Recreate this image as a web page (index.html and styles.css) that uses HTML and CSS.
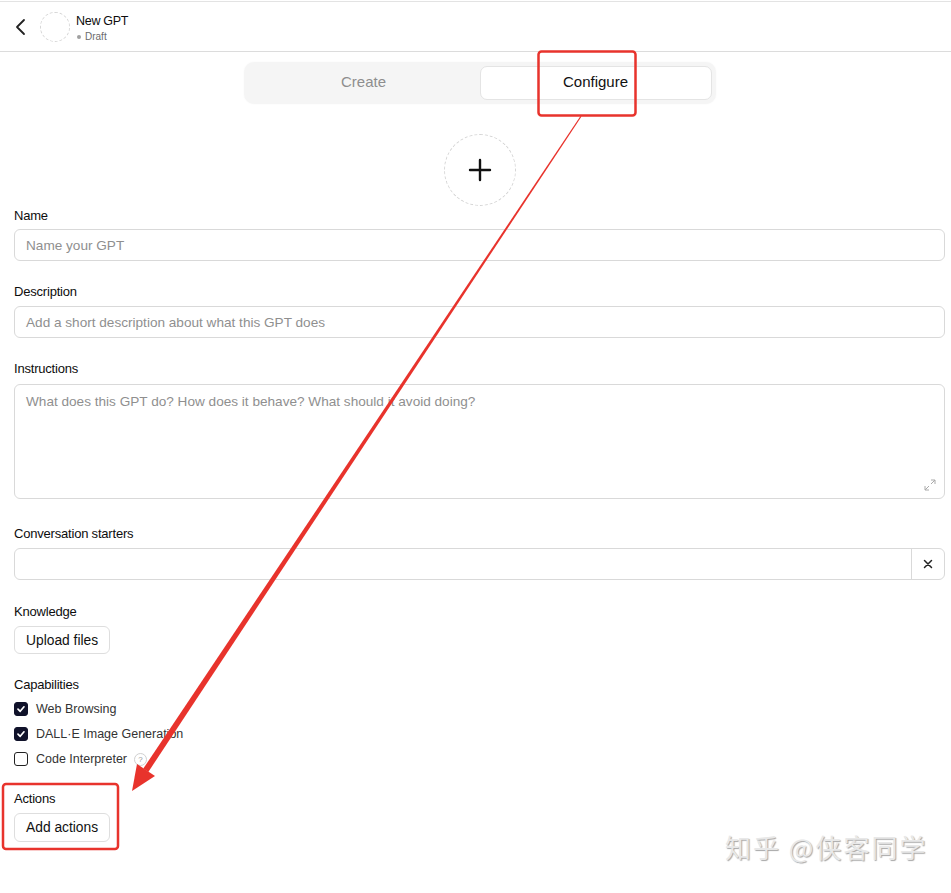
FILE: index.html
```html
<!DOCTYPE html>
<html lang="en">
<head>
  <meta charset="UTF-8" />
  <meta name="viewport" content="width=device-width, initial-scale=1" />
  <title>New GPT</title>
  <link rel="stylesheet" href="styles.css">
</head>
<body>

  <header class="topbar">
    <svg class="back" width="14" height="18" viewBox="0 0 14 18"><path d="M10 2 L3 9 L10 16" fill="none" stroke="#222" stroke-width="1.8" stroke-linecap="round" stroke-linejoin="round"/></svg>
    <div class="avatar"></div>
    <div class="title">
      <div class="name">New GPT</div>
      <div class="status"><span class="dot"></span>Draft</div>
    </div>
  </header>

  <main class="form">
    <div class="tabs">
      <div class="tab">Create</div>
      <div class="tab active">Configure</div>
    </div>

    <div class="upload">
      <svg width="24" height="24" viewBox="0 0 24 24"><path d="M12 2 V22 M2 12 H22" stroke="#111" stroke-width="2.4" stroke-linecap="round"/></svg>
    </div>

    <div class="field first">
      <label>Name</label>
      <div class="input">Name your GPT</div>
    </div>

    <div class="field">
      <label>Description</label>
      <div class="input">Add a short description about what this GPT does</div>
    </div>

    <div class="field">
      <label>Instructions</label>
      <div class="input area">
        What does this GPT do? How does it behave? What should it avoid doing?
        <svg class="resize" width="12" height="12" viewBox="0 0 12 12"><path d="M7 1 H11 V5 M11 1 L7 5 M5 11 H1 V7 M1 11 L5 7" fill="none" stroke="#aaa" stroke-width="1"/></svg>
      </div>
    </div>

    <div class="field starters">
      <label>Conversation starters</label>
      <div class="input row">
        <div class="grow"></div>
        <div class="remove">
          <svg width="10" height="10" viewBox="0 0 10 10"><path d="M1.5 1.5 L8.5 8.5 M8.5 1.5 L1.5 8.5" stroke="#222" stroke-width="1.5" stroke-linecap="round"/></svg>
        </div>
      </div>
    </div>

    <div class="field knowledge">
      <label>Knowledge</label>
      <button class="btn">Upload files</button>
    </div>

    <div class="field">
      <label>Capabilities</label>
      <div class="check"><span class="box on"><svg width="10" height="10" viewBox="0 0 10 10"><path d="M2 5.2 L4.2 7.3 L8 2.8" fill="none" stroke="#fff" stroke-width="1.7" stroke-linecap="round" stroke-linejoin="round"/></svg></span>Web Browsing</div>
      <div class="check"><span class="box on"><svg width="10" height="10" viewBox="0 0 10 10"><path d="M2 5.2 L4.2 7.3 L8 2.8" fill="none" stroke="#fff" stroke-width="1.7" stroke-linecap="round" stroke-linejoin="round"/></svg></span>DALL·E Image Generation</div>
      <div class="check"><span class="box"></span>Code Interpreter <span class="help">?</span></div>
    </div>

    <div class="field actions">
      <label>Actions</label>
      <button class="btn">Add actions</button>
    </div>
  </main>

  <svg class="marks" width="951" height="893" viewBox="0 0 951 893">
    <rect x="538.5" y="51.5" width="97" height="64" rx="3" fill="none" stroke="#e8332c" stroke-width="2.5"/>
    <rect x="3" y="784" width="115" height="65" rx="3" fill="none" stroke="#e8332c" stroke-width="2.5"/>
    <polygon points="580.5,116 581.5,116.5 148.3,772 143.3,768.6" fill="#e8332c"/>
    <polygon points="132,791 137,764 155,776" fill="#e8332c"/>
  </svg>

  <div class="watermark">知乎 @侠客同学</div>

</body>
</html>
```

FILE: styles.css
```css
body {
  margin: 0;
  font-family: "Liberation Sans", Arial, sans-serif;
  color: #0d0d0d;
  background: #fff;
  position: relative;
  width: 951px;
  height: 893px;
  overflow: hidden;
}
.topbar {
  height: 49px;
  border-top: 1px solid #e3e3e3;
  border-bottom: 1px solid #dcdcdc;
  margin-top: 1px;
  display: flex;
  align-items: center;
  padding-left: 14px;
}
.back {
  margin-right: 12px;
}
.avatar {
  width: 28px;
  height: 28px;
  border: 1px dashed #d6d6d6;
  border-radius: 50%;
  margin-right: 6px;
}
.title {
  padding-top: 3px;
}
.title .name {
  font-size: 12.5px;
  letter-spacing: -0.3px;
  line-height: 16px;
}
.title .status {
  font-size: 10px;
  color: #6b6b6b;
  line-height: 14px;
  margin-top: 1px;
  display: flex;
  align-items: center;
}
.dot {
  width: 4px;
  height: 4px;
  border-radius: 50%;
  background: #a0a0a0;
  margin: 0 4px 0 1px;
}
.form {
  padding: 0 6px 0 14px;
}
.tabs {
  width: 464px;
  margin: 10px auto 0;
  padding: 4px;
  display: flex;
  background: #f5f5f5;
  border-radius: 10px;
  box-shadow: 0 0 2px rgba(0, 0, 0, 0.04);
}
.tab {
  flex: 1;
  height: 34px;
  padding-bottom: 3px;
  display: flex;
  align-items: center;
  justify-content: center;
  font-size: 15px;
  color: #8e8e8e;
  border-radius: 7px;
  border: 1px solid transparent;
  box-sizing: border-box;
}
.tab.active {
  background: #fff;
  color: #111;
  border-color: #e4e4e4;
}
.upload {
  width: 70px;
  height: 70px;
  margin: 30px auto 0;
  border: 1px dashed #d4d4d4;
  border-radius: 50%;
  display: flex;
  align-items: center;
  justify-content: center;
}
.field {
  margin-top: 23px;
}
.field.first {
  margin-top: 2px;
}
.field.starters {
  margin-top: 27px;
}
.field.knowledge {
  margin-top: 24px;
}
.field label {
  display: block;
  font-size: 13px;
  line-height: 16px;
  margin-bottom: 6px;
  letter-spacing: -0.2px;
}
.field.first label {
  margin-bottom: 5px;
}
.input {
  height: 32px;
  box-sizing: border-box;
  border: 1px solid #d9d9d9;
  border-radius: 6px;
  padding: 0 11px;
  font-size: 13.6px;
  color: #8f8f8f;
  display: flex;
  align-items: center;
}
.input.area {
  height: 115px;
  align-items: flex-start;
  padding-top: 9px;
  margin-top: 7px;
  position: relative;
}
.resize {
  position: absolute;
  right: 8px;
  bottom: 7px;
}
.input.row {
  padding: 0;
}
.grow {
  flex: 1;
}
.remove {
  width: 32px;
  height: 100%;
  border-left: 1px solid #d9d9d9;
  display: flex;
  align-items: center;
  justify-content: center;
}
.btn {
  font-family: "Liberation Sans", Arial, sans-serif;
  font-size: 13.8px;
  color: #111;
  background: #fff;
  border: 1px solid #dedede;
  border-radius: 6px;
  height: 28px;
  padding: 0 11px;
  margin: 0;
}
.check {
  display: flex;
  align-items: center;
  font-size: 12.5px;
  color: #333;
  height: 16px;
  margin-top: 9px;
}
.field label + .check {
  margin-top: 8px;
}
.box {
  width: 14px;
  height: 14px;
  box-sizing: border-box;
  border: 1.5px solid #222;
  border-radius: 3px;
  margin-right: 8px;
  display: flex;
  align-items: center;
  justify-content: center;
}
.box.on {
  background: #10122a;
  border-color: #10122a;
}
.help {
  width: 11px;
  height: 11px;
  border: 1px solid #d0d0d0;
  border-radius: 50%;
  font-size: 8px;
  color: #999;
  display: inline-flex;
  align-items: center;
  justify-content: center;
  margin-left: 7px;
}
.field.actions {
  margin-top: 24px;
}
.field.actions .btn {
  height: 29px;
}
.marks {
  position: absolute;
  left: 0;
  top: 0;
  pointer-events: none;
}
.watermark {
  position: absolute;
  left: 725px;
  top: 828px;
  font-family: "Noto Sans CJK SC", sans-serif;
  font-size: 26px;
  color: #e8e8e8;
  text-shadow: 1px 1px 1px rgba(0, 0, 0, 0.35);
  letter-spacing: 2px;
}
```
